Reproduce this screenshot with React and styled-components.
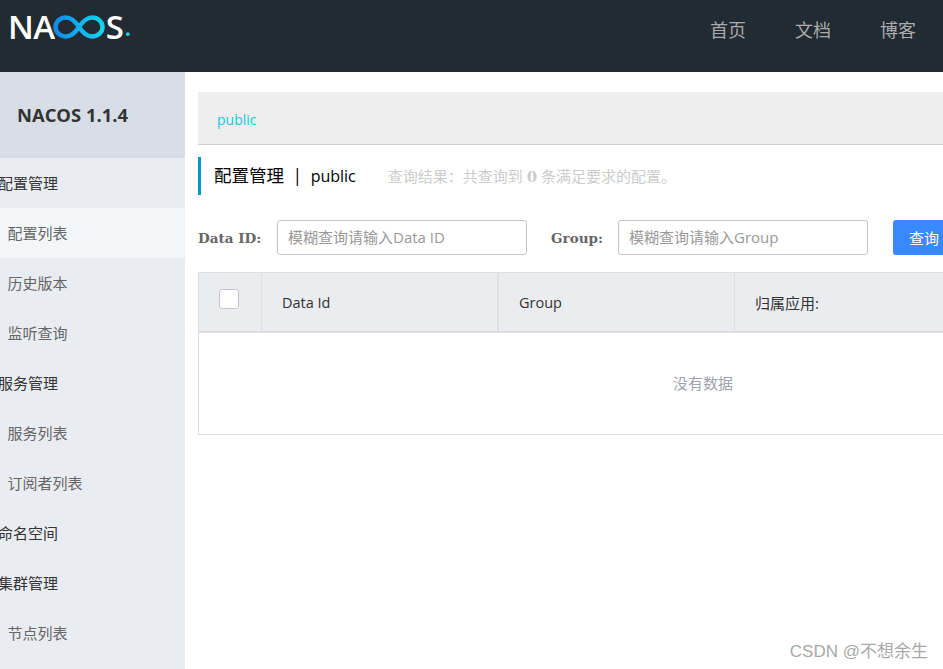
import React from 'react';
import styled, { createGlobalStyle } from 'styled-components';

const GlobalStyle = createGlobalStyle`
  html, body {
    margin: 0;
    height: 100%;
    overflow: hidden;
    background: #fff;
    font-family: "Open Sans", "Noto Sans CJK SC", sans-serif;
  }
  * { box-sizing: border-box; }
`;

const Page = styled.div`
  position: relative;
  width: 943px;
  height: 669px;
  overflow: hidden;
`;

const Header = styled.header`
  height: 72px;
  background: #222a32;
  display: flex;
  justify-content: space-between;
  align-items: flex-start;
`;

const Logo = styled.div`
  display: flex;
  align-items: center;
  height: 23px;
  margin: 15px 0 0 8px;
  color: #fff;
  font-family: "Open Sans", sans-serif;
  font-size: 33px;
  font-weight: 600;
  line-height: 23px;
  letter-spacing: -0.5px;
  svg { margin: 0 1px 0 -2px; }
`;

const LogoDot = styled.span`
  color: #1ccfe0;
  font-size: 26px;
  margin-left: 1px;
`;

const Nav = styled.nav`
  display: flex;
  gap: 49px;
  margin: 18px 27px 0 0;
  font-size: 18px;
  line-height: 24px;
  color: #a9abac;
`;

const Body = styled.div`
  display: flex;
  height: 597px;
`;

const Sidebar = styled.aside`
  flex: 0 0 185px;
  background: #e9ecf1;
`;

const SideTitle = styled.div`
  height: 86px;
  padding: 0 0 2px 17px;
  display: flex;
  align-items: center;
  background: #d7dee5;
  color: #333;
  font-size: 18.4px;
  font-weight: 700;
`;

const MenuItem = styled.div`
  height: 50px;
  line-height: 50px;
  font-size: 15px;
  white-space: nowrap;
  padding-left: ${(p) => (p.$sub ? '7.5px' : '0')};
  text-indent: ${(p) => (p.$sub ? '0' : '-2px')};
  color: ${(p) => (p.$sub ? '#666' : '#333')};
  background: ${(p) => (p.$active ? '#f2f6f9' : 'transparent')};
`;

const Main = styled.main`
  flex: 0 0 1040px;
  padding: 20px 0 0 13px;
`;

const Breadcrumb = styled.div`
  height: 53px;
  padding: 16px 0 0 19px;
  background: #eee;
  border-bottom: 1px solid #ccc;
  color: #1cc5e0;
  font-size: 14px;
  line-height: 24px;
`;

const Heading = styled.div`
  display: flex;
  align-items: center;
  height: 38px;
  margin-top: 12px;
  padding: 0 0 4px 13px;
  border-left: 3px solid #09c;
`;

const Title = styled.h1`
  margin: 0;
  font-size: 17.5px;
  font-weight: 400;
  color: #000;
  white-space: pre;
`;

const TitleName = styled.span`
  font-size: 16px;
`;

const Divider = styled.span`
  margin: 0 8.5px;
  color: #000;
`;

const Result = styled.span`
  margin: 3px 0 0 32px;
  font-size: 15px;
  color: #ccc;
  b { font-family: "DejaVu Serif", serif; }
`;

const SearchForm = styled.form`
  display: flex;
  align-items: center;
  height: 35px;
  margin-top: 25px;
`;

const Label = styled.label`
  width: ${(p) => p.$width}px;
  font-family: "DejaVu Serif", serif;
  font-size: 13.5px;
  font-weight: 700;
  color: #666;
  white-space: nowrap;
`;

const SearchInput = styled.input`
  width: 250px;
  height: 35px;
  margin-right: ${(p) => p.$gap}px;
  padding: 0 10px 2px;
  border: 1px solid #c4c6cf;
  border-radius: 3px;
  font: 15px "Open Sans", "Noto Sans CJK SC", sans-serif;
  &::placeholder { color: #999; opacity: 1; }
`;

const QueryButton = styled.button`
  flex: 0 0 62px;
  height: 35px;
  padding: 0 0 0 16px;
  border: 0;
  border-radius: 3px;
  background: #3a88fd;
  color: #fff;
  font: 15px "Noto Sans CJK SC", sans-serif;
  text-align: left;
`;

const Table = styled.div`
  width: 1010px;
  height: 163px;
  margin-top: 17px;
  border: 1px solid #dcdee3;
`;

const TableHead = styled.div`
  display: grid;
  grid-template-columns: 63px 237px 236px 1fr;
  height: 60px;
  background: #ebecf0;
  border-bottom: 2px solid #dcdee3;
`;

const HeadCell = styled.div`
  display: flex;
  align-items: center;
  padding: 1px 0 0 20px;
  border-right: ${(p) => p.$rule || 1}px solid #dcdee3;
  font-size: 14.5px;
  color: #333;
  &:last-child {
    border-right: 0;
    font-size: 15px;
  }
`;

const CheckBox = styled.span`
  width: 20px;
  height: 20px;
  margin-top: -7px;
  background: #fff;
  border: 1px solid #c4c6cf;
  border-radius: 3px;
`;

const Empty = styled.div`
  height: 100px;
  line-height: 100px;
  text-align: center;
  font-size: 15px;
  color: #a0a2ad;
`;

const Watermark = styled.div`
  position: absolute;
  right: 15px;
  bottom: 5px;
  font-family: "Liberation Sans", "Noto Sans CJK SC", sans-serif;
  font-size: 17px;
  line-height: 24px;
  color: #a8a8a8;
`;

const menu = [
  { text: '配置管理' },
  { text: '配置列表', sub: true, active: true },
  { text: '历史版本', sub: true },
  { text: '监听查询', sub: true },
  { text: '服务管理' },
  { text: '服务列表', sub: true },
  { text: '订阅者列表', sub: true },
  { text: '命名空间' },
  { text: '集群管理' },
  { text: '节点列表', sub: true },
];

const InfinityMark = () => (
  <svg width="52" height="24" viewBox="0 0 52 24" fill="none">
    <defs>
      <linearGradient id="nacosLoop" x1="0" x2="1" y1="0" y2="0">
        <stop offset="0" stopColor="#0f8cf0" />
        <stop offset="1" stopColor="#14d4e8" />
      </linearGradient>
    </defs>
    <path
      d="M26 12 C22 6 18 2.5 13 2.5 C7 2.5 2.5 6.8 2.5 12 C2.5 17.2 7 21.5 13 21.5 C18 21.5 22 18 26 12 C30 6 34 2.5 39 2.5 C45 2.5 49.5 6.8 49.5 12 C49.5 17.2 45 21.5 39 21.5 C34 21.5 30 18 26 12 Z"
      stroke="url(#nacosLoop)"
      strokeWidth="4.5"
    />
  </svg>
);

export default function App() {
  return (
    <Page>
      <GlobalStyle />
      <Header>
        <Logo>
          NA
          <InfinityMark />
          S<LogoDot>.</LogoDot>
        </Logo>
        <Nav>
          <span>首页</span>
          <span>文档</span>
          <span>博客</span>
        </Nav>
      </Header>
      <Body>
        <Sidebar>
          <SideTitle>NACOS 1.1.4</SideTitle>
          {menu.map((item) => (
            <MenuItem key={item.text} $sub={item.sub} $active={item.active}>
              {item.text}
            </MenuItem>
          ))}
        </Sidebar>
        <Main>
          <Breadcrumb>public</Breadcrumb>
          <Heading>
            <Title>
              配置管理<Divider>|</Divider>
              <TitleName>public</TitleName>
            </Title>
            <Result>
              查询结果：共查询到 <b>0</b> 条满足要求的配置。
            </Result>
          </Heading>
          <SearchForm>
            <Label $width={79}>Data ID:</Label>
            <SearchInput $gap={24} placeholder="模糊查询请输入Data ID" />
            <Label $width={67}>Group:</Label>
            <SearchInput $gap={25} placeholder="模糊查询请输入Group" />
            <QueryButton type="button">查询</QueryButton>
          </SearchForm>
          <Table>
            <TableHead>
              <HeadCell>
                <CheckBox />
              </HeadCell>
              <HeadCell $rule={2}>Data Id</HeadCell>
              <HeadCell>Group</HeadCell>
              <HeadCell>归属应用:</HeadCell>
            </TableHead>
            <Empty>没有数据</Empty>
          </Table>
        </Main>
      </Body>
      <Watermark>CSDN @不想余生</Watermark>
    </Page>
  );
}
